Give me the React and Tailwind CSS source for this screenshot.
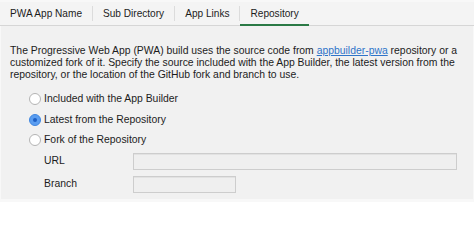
import React, { useState } from 'react';

const tabs = ['PWA App Name', 'Sub Directory', 'App Links', 'Repository'];

const options = [
    'Included with the App Builder',
    'Latest from the Repository',
    'Fork of the Repository',
];

const Radio = ({ checked }) => {
    if (checked) {
        return (
            <span className="w-[12px] h-[12px] rounded-full bg-[#5a9df0] border border-[#3f86e0] flex items-center justify-center shrink-0">
                <span className="w-[4px] h-[4px] rounded-full bg-[#1d5fc4]" />
            </span>
        );
    }
    return <span className="w-[12px] h-[12px] rounded-full bg-white border border-[#b4b4b4] shrink-0" />;
};

const App = () => {
    const [active] = useState('Repository');
    const [source, setSource] = useState(1);

    return (
        <div
            className="w-[474px] h-[202px] bg-[#f8f8f8] text-[#1c1c1c] text-[10.4px] overflow-hidden"
            style={{ fontFamily: '"Liberation Sans", Arial, sans-serif' }}
        >
            {/* tab strip */}
            <div className="mt-[2px] h-[24px] flex items-stretch bg-[#f4f4f4] border-b border-[#d6d6d6] text-[10.1px]">
                {tabs.map((t, i) => (
                    <div key={t} className="flex items-stretch">
                        {i > 0 && <div className="w-px my-[4px] bg-[#dcdcdc]" />}
                        <div
                            className={
                                t === active
                                    ? 'px-[10px] flex items-center border-b-2 border-[#2b7a46] -mb-px pt-[1px]'
                                    : 'px-[10px] flex items-center pt-[1px]'
                            }
                        >
                            {t}
                        </div>
                    </div>
                ))}
            </div>

            {/* panel */}
            <div className="h-[173px] bg-[#f1f1f1] mx-[1px] pt-[19px]">
                <p className="pl-[9px] leading-[12px] whitespace-nowrap">
                    The Progressive Web App (PWA) build uses the source code from{' '}
                    <span className="text-[#2f74c9] underline">appbuilder-pwa</span> repository or a
                    <br />
                    customized fork of it. Specify the source included with the App Builder, the latest version from the
                    <br />
                    repository, or the location of the GitHub fork and branch to use.
                </p>

                <div className="mt-[8px] pl-[28px] flex flex-col">
                    {options.map((o, i) => (
                        <div
                            key={o}
                            className="h-[20.5px] flex items-center gap-[3px] cursor-default"
                            onClick={() => setSource(i)}
                        >
                            <Radio checked={source === i} />
                            <span>{o}</span>
                        </div>
                    ))}
                </div>

                <div className="mt-[2px] pl-[43px] flex flex-col gap-[6px]">
                    <div className="flex items-center h-[17px]">
                        <span className="w-[89px]">URL</span>
                        <div className="w-[324px] h-[17px] border border-[#cdcdcd] bg-[#efefef] shadow-[inset_0_1px_0_#e2e2e2]" />
                    </div>
                    <div className="flex items-center h-[17px]">
                        <span className="w-[89px]">Branch</span>
                        <div className="w-[103px] h-[17px] border border-[#cdcdcd] bg-[#efefef] shadow-[inset_0_1px_0_#e2e2e2]" />
                    </div>
                </div>
            </div>
        </div>
    );
};

export default App;
